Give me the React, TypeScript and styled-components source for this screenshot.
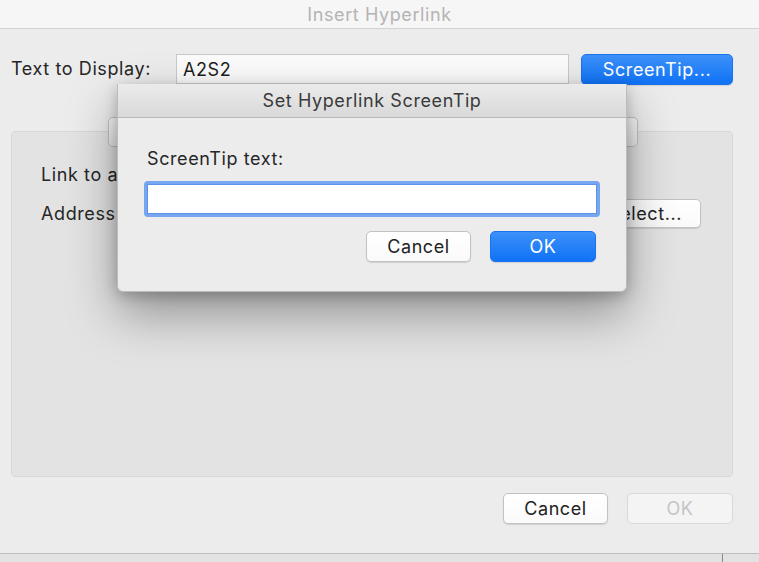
import React from 'react';
import styled, { createGlobalStyle, css } from 'styled-components';

const GlobalStyle = createGlobalStyle`
  html, body {
    margin: 0;
    padding: 0;
    background: #ececec;
  }
  body {
    font-family: Inter, "Noto Sans", "Liberation Sans", sans-serif;
    letter-spacing: 0.6px;
    -webkit-font-smoothing: antialiased;
  }
`;

const App = () => {
  return (
    <>
      <GlobalStyle />
      <Window>
        <TitleBar>Insert Hyperlink</TitleBar>
        <Body>
          <DisplayRow>
            <Label width={165}>Text to Display:</Label>
            <TextField>A2S2</TextField>
            <Button primary width={152} height={31}>
              ScreenTip...
            </Button>
          </DisplayRow>

          <GroupBox>
            <TabStrip />
            <GroupRow>
              <Label>Link to a web page:</Label>
            </GroupRow>
            <GroupRow>
              <Label>Address:</Label>
              <Spacer />
              <Button width={112} height={29}>
                Select...
              </Button>
            </GroupRow>
          </GroupBox>

          <Footer>
            <Button width={105} height={31}>
              Cancel
            </Button>
            <Button disabled width={106} height={31}>
              OK
            </Button>
          </Footer>
        </Body>
        <BottomStrip>
          <StripDivider />
        </BottomStrip>

        <Sheet>
          <SheetHeader>Set Hyperlink ScreenTip</SheetHeader>
          <SheetBody>
            <SheetLabel>ScreenTip text:</SheetLabel>
            <FocusRing>
              <SheetInput />
            </FocusRing>
            <SheetButtons>
              <Button width={105} height={31}>
                Cancel
              </Button>
              <Button primary width={106} height={31}>
                OK
              </Button>
            </SheetButtons>
          </SheetBody>
        </Sheet>
      </Window>
    </>
  );
};

const Window = styled.div`
  position: relative;
  width: 759px;
  height: 562px;
  overflow: hidden;
  display: flex;
  flex-direction: column;
  background: #ececec;
  color: #262626;
`;

const TitleBar = styled.div`
  height: 28px;
  flex-shrink: 0;
  display: flex;
  align-items: center;
  justify-content: center;
  background: #f6f6f6;
  border-bottom: 1px solid #d2d2d2;
  color: #b4b4b4;
  font-size: 18px;
`;

const Body = styled.div`
  flex: 1;
  display: flex;
  flex-direction: column;
  padding: 24px 26px 0 11px;
`;

const DisplayRow = styled.div`
  display: flex;
  align-items: center;
  height: 32px;
`;

const Label = styled.span<{ width?: number }>`
  font-size: 18px;
  line-height: 22px;
  color: #262626;
  white-space: nowrap;
  ${({ width }) =>
    width &&
    css`
      width: ${width}px;
      flex-shrink: 0;
    `}
`;

const TextField = styled.div`
  width: 393px;
  height: 30px;
  display: flex;
  align-items: center;
  padding-left: 6px;
  box-sizing: border-box;
  background: #fbfbfb;
  border: 1px solid #c9c9c9;
  font-size: 18px;
  color: #1e1e1e;
`;

const Button = styled.button<{ primary?: boolean; width: number; height: number }>`
  width: ${({ width }) => width}px;
  height: ${({ height }) => height}px;
  box-sizing: border-box;
  border-radius: 5px;
  font-family: inherit;
  font-size: 18px;
  letter-spacing: 0.6px;
  padding: 0;
  display: flex;
  align-items: center;
  justify-content: center;
  background: linear-gradient(#ffffff, #fafafa);
  border: 1px solid #c2c2c2;
  box-shadow: 0 1px 1px rgba(0, 0, 0, 0.12);
  color: #222;
  margin-left: auto;

  ${({ primary }) =>
    primary &&
    css`
      background: linear-gradient(#3d91f9, #0f72f6);
      border: 1px solid #1c73ee;
      color: #ffffff;
    `}

  &:disabled {
    background: #f4f4f4;
    border-color: #d8d8d8;
    color: #c4c4c4;
    box-shadow: none;
  }
`;

const GroupBox = styled.div`
  position: relative;
  margin-top: 46px;
  height: 346px;
  box-sizing: border-box;
  background: #e3e3e3;
  border: 1px solid #d8d8d8;
  border-radius: 5px;
  padding: 28px 31px 0 29px;
  display: flex;
  flex-direction: column;
  gap: 10px;
`;

const TabStrip = styled.div`
  position: absolute;
  top: -15px;
  left: 96px;
  width: 530px;
  height: 30px;
  box-sizing: border-box;
  border: 1px solid #c4c4c4;
  border-radius: 5px;
  background: linear-gradient(#fafafa, #ededed);
`;

const GroupRow = styled.div`
  display: flex;
  align-items: center;
  height: 29px;
`;

const Spacer = styled.div`
  flex: 1;
`;

const Footer = styled.div`
  display: flex;
  justify-content: flex-end;
  gap: 19px;
  margin-top: 16px;
  & > button {
    margin-left: 0;
  }
`;

const BottomStrip = styled.div`
  position: relative;
  height: 8px;
  flex-shrink: 0;
  background: #e2e2e2;
  border-top: 1px solid #bdbdbd;
`;

const StripDivider = styled.div`
  position: absolute;
  left: 722px;
  top: 0;
  bottom: 0;
  width: 1px;
  background: #888;
`;

const Sheet = styled.div`
  position: absolute;
  left: 117px;
  top: 84px;
  width: 510px;
  height: 208px;
  box-sizing: border-box;
  border: 1px solid #bcbcbc;
  border-top: none;
  border-radius: 0 0 6px 6px;
  background: #ececec;
  box-shadow: 0 22px 50px rgba(0, 0, 0, 0.36), 0 4px 14px rgba(0, 0, 0, 0.22);
  display: flex;
  flex-direction: column;
`;

const SheetHeader = styled.div`
  height: 33px;
  flex-shrink: 0;
  display: flex;
  align-items: center;
  justify-content: center;
  background: linear-gradient(#ebebeb, #d9d9d9);
  border-bottom: 1px solid #b9b9b9;
  border-radius: 6px 6px 0 0;
  font-size: 18px;
  color: #3a3a3a;
`;

const SheetBody = styled.div`
  flex: 1;
  display: flex;
  flex-direction: column;
  padding: 30px 30px 0 26px;
`;

const SheetLabel = styled.span`
  font-size: 18px;
  line-height: 22px;
  color: #262626;
  margin-left: 3px;
`;

const FocusRing = styled.div`
  margin-top: 11px;
  width: 456px;
  height: 36px;
  box-sizing: border-box;
  padding: 3px;
  border-radius: 4px;
  background: #76a6ef;
`;

const SheetInput = styled.div`
  width: 100%;
  height: 100%;
  background: #ffffff;
  box-shadow: inset 0 0 0 1px #5d93e6;
`;

const SheetButtons = styled.div`
  display: flex;
  justify-content: flex-end;
  gap: 19px;
  margin-top: 14px;
  & > button {
    margin-left: 0;
  }
`;

export default App;
